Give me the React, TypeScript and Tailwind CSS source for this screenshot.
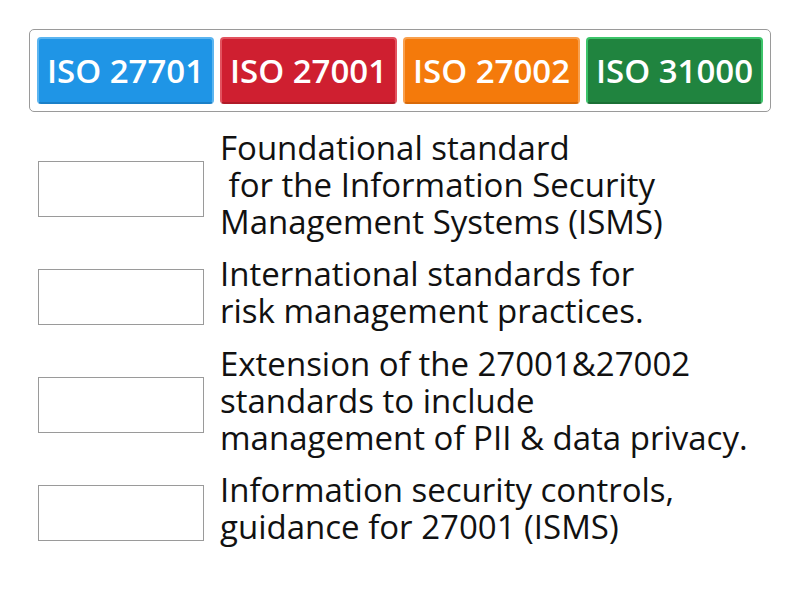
import React from 'react'

const tiles = [
  { label: 'ISO 27701', cls: 'bg-[#1f95e6] border-[#5cb5f0] border-b-[#1a80c8]' },
  { label: 'ISO 27001', cls: 'bg-[#cf1f30] border-[#e2535f] border-b-[#b01a28]' },
  { label: 'ISO 27002', cls: 'bg-[#f47a0b] border-[#f8a04e] border-b-[#d96a08]' },
  { label: 'ISO 31000', cls: 'bg-[#20843f] border-[#3cc46a] border-b-[#1a7035]' },
]

const rows = [
  ['Foundational standard', ' for the Information Security', 'Management Systems (ISMS)'],
  ['International standards for', 'risk management practices.'],
  ['Extension of the 27001&27002', 'standards to include', 'management of PII & data privacy.'],
  ['Information security controls,', 'guidance for 27001 (ISMS)'],
]

export default function App() {
  return (
    <div className="w-[800px] h-[600px] bg-white" style={{ fontFamily: "'Open Sans', sans-serif" }}>
      {/* answer tiles */}
      <div className="pt-[29px] px-[29px]">
        <div className="flex gap-[6px] border border-[#9a9a9a] rounded-[5px] p-[7px] h-[83px]">
          {tiles.map((t) => (
            <div
              key={t.label}
              className={`flex-1 flex items-center justify-center rounded-[4px] border-2 text-white font-semibold text-[33px] leading-none ${t.cls}`}
            >
              {t.label}
            </div>
          ))}
        </div>
      </div>

      {/* matching rows */}
      <div className="mt-[23px] pl-[38px]">
        {rows.map((lines, i) => (
          <div key={i} className="h-[108px] flex items-center">
            <div className="w-[166px] h-[56px] border border-[#9a9a9a] bg-white shrink-0" />
            <div className="ml-[16px] pb-[10px] text-[33px] leading-[37px] text-[#111] whitespace-pre">
              {lines.map((l, j) => (
                <div key={j}>{l}</div>
              ))}
            </div>
          </div>
        ))}
      </div>
    </div>
  )
}
